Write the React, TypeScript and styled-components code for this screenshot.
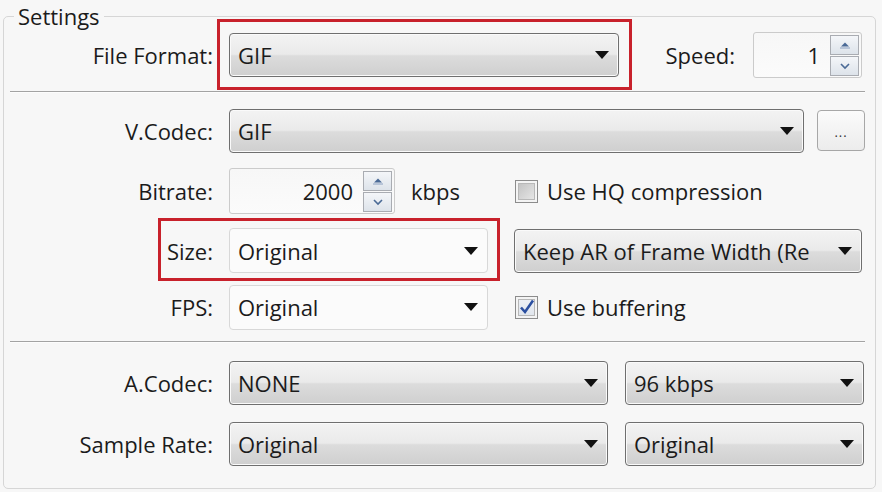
import styled, { createGlobalStyle } from 'styled-components'

const Global = createGlobalStyle`
  html, body {
    margin: 0;
    padding: 0;
    background: #f7f7f7;
  }
  body {
    width: 882px;
    height: 492px;
    overflow: hidden;
    font-family: "Open Sans", "Noto Sans", "Liberation Sans", sans-serif;
    font-size: 22px;
    color: #1b1b1b;
  }
`

const Arrow = () => <Tri />

const SpinButtons = () => (
  <Spinner>
    <SpinBtn>
      <svg width="12" height="8" viewBox="0 0 12 8">
        <path d="M2 5.5 L6 1.5 L10 5.5 Z" fill="#4a6a96" />
        <path d="M1 7 H11" stroke="#8aa0c0" strokeWidth="1" />
      </svg>
    </SpinBtn>
    <SpinBtn>
      <svg width="12" height="8" viewBox="0 0 12 8">
        <path d="M2 2 L6 6 L10 2" fill="none" stroke="#4a6a96" strokeWidth="1.6" />
      </svg>
    </SpinBtn>
  </Spinner>
)

const App = () => {
  return (
    <>
      <Global />
      <Group>
        <Legend>Settings</Legend>

        <Row $top={4}>
          <Label>File Format:</Label>
          <Highlight $inset="-14px -13px -13px -12px">
            <Combo $w={390}>
              <ComboText>GIF</ComboText>
              <Arrow />
            </Combo>
          </Highlight>
          <SideLabel $w={105} $ml={11}>Speed:</SideLabel>
          <Spin $w={109} $ml={18}>
            <SpinValue>1</SpinValue>
            <SpinButtons />
          </Spin>
        </Row>

        <Separator $top={14} />

        <Row $top={16}>
          <Label>V.Codec:</Label>
          <Combo $w={575}>
            <ComboText>GIF</ComboText>
            <Arrow />
          </Combo>
          <DotsButton>...</DotsButton>
        </Row>

        <Row $top={16}>
          <Label>Bitrate:</Label>
          <Spin $w={166}>
            <SpinValue>2000</SpinValue>
            <SpinButtons />
          </Spin>
          <SideText $w={104} $ml={16}>kbps</SideText>
          <Check>
            <CheckBox />
            <span>Use HQ compression</span>
          </Check>
        </Row>

        <Row $top={15} $h={45}>
          <Label>Size:</Label>
          <Highlight $inset="-10px -12px -8px -71px">
            <FlatCombo $w={259}>
              <ComboText>Original</ComboText>
              <Arrow />
            </FlatCombo>
          </Highlight>
          <Combo $w={348} $ml={26}>
            <ComboText>Keep AR of Frame Width (Re</ComboText>
            <Arrow />
          </Combo>
        </Row>

        <Row $top={12}>
          <Label>FPS:</Label>
          <FlatCombo $w={259}>
            <ComboText>Original</ComboText>
            <Arrow />
          </FlatCombo>
          <Check $ml={27}>
            <CheckBox $checked>
              <svg width="18" height="18" viewBox="0 0 18 18">
                <path d="M3 9.5 L7 14 L15 2.5" fill="none" stroke="#2b4fa0" strokeWidth="2.6" />
              </svg>
            </CheckBox>
            <span>Use buffering</span>
          </Check>
        </Row>

        <Separator $top={12} />

        <Row $top={18}>
          <Label>A.Codec:</Label>
          <Combo $w={379}>
            <ComboText>NONE</ComboText>
            <Arrow />
          </Combo>
          <Combo $w={239} $ml={17}>
            <ComboText>96 kbps</ComboText>
            <Arrow />
          </Combo>
        </Row>

        <Row $top={17}>
          <Label>Sample Rate:</Label>
          <Combo $w={379}>
            <ComboText>Original</ComboText>
            <Arrow />
          </Combo>
          <Combo $w={239} $ml={17}>
            <ComboText>Original</ComboText>
            <Arrow />
          </Combo>
        </Row>
      </Group>
    </>
  )
}

export default App

const Group = styled.fieldset`
  box-sizing: border-box;
  width: 873px;
  margin: 3px 0 0 3px;
  padding: 0 10px 22px 6px;
  border: 1px solid #d6d6d6;
  border-radius: 5px;
  min-width: 0;
`

const Legend = styled.legend`
  padding: 0 4px;
  margin-left: 4px;
  line-height: 26px;
  font-size: 22px;
`

const Row = styled.div<{ $top: number; $h?: number }>`
  display: flex;
  align-items: center;
  height: ${p => p.$h ?? 44}px;
  margin-top: ${p => p.$top}px;
`

const Label = styled.div`
  width: 203px;
  margin-right: 16px;
  text-align: right;
  white-space: nowrap;
`

const SideLabel = styled.div<{ $w: number; $ml: number }>`
  width: ${p => p.$w}px;
  margin-left: ${p => p.$ml}px;
  text-align: right;
`

const SideText = styled.div<{ $w: number; $ml: number }>`
  width: ${p => p.$w}px;
  margin-left: ${p => p.$ml}px;
`

const Separator = styled.div<{ $top: number }>`
  height: 1px;
  background: #a3a3a3;
  border-bottom: 1px solid #fdfdfd;
  margin-top: ${p => p.$top}px;
`

const Highlight = styled.div<{ $inset: string }>`
  position: relative;
  display: flex;

  &::after {
    content: '';
    position: absolute;
    inset: ${p => p.$inset};
    border: 3px solid #c8212b;
    pointer-events: none;
  }
`

const Combo = styled.div<{ $w: number; $ml?: number }>`
  box-sizing: border-box;
  width: ${p => p.$w}px;
  height: 44px;
  margin-left: ${p => p.$ml ?? 0}px;
  display: flex;
  align-items: center;
  padding: 0 9px 0 8px;
  border: 1px solid #6f6f6f;
  border-radius: 4px;
  box-shadow: inset 0 0 0 1px #fafafa;
  background: linear-gradient(#f3f3f3 0%, #eaeaea 48%, #dcdcdc 52%, #cfcfcf 100%);
`

const FlatCombo = styled(Combo)`
  border-color: #d8d8d8;
  box-shadow: none;
  background: #fbfbfb;
  height: 45px;
`

const ComboText = styled.div`
  flex: 1;
  white-space: nowrap;
`

const Tri = styled.div`
  width: 0;
  height: 0;
  border-left: 7px solid transparent;
  border-right: 7px solid transparent;
  border-top: 8px solid #111;
`

const Spin = styled.div<{ $w: number; $ml?: number }>`
  box-sizing: border-box;
  width: ${p => p.$w}px;
  height: 46px;
  margin-left: ${p => p.$ml ?? 0}px;
  display: flex;
  align-items: center;
  padding: 0 2px 0 8px;
  border: 1px solid #cbcbcb;
  border-radius: 3px;
  background: linear-gradient(#f7f7f7, #fbfbfb);
`

const SpinValue = styled.div`
  flex: 1;
  text-align: right;
  padding-right: 10px;
`

const Spinner = styled.div`
  display: flex;
  flex-direction: column;
  gap: 1px;
`

const SpinBtn = styled.div`
  box-sizing: border-box;
  width: 29px;
  height: 20px;
  display: flex;
  align-items: center;
  justify-content: center;
  border: 1px solid #a9acb2;
  background: linear-gradient(#f4f6f9, #dde3ea);
`

const DotsButton = styled.div`
  box-sizing: border-box;
  width: 48px;
  height: 41px;
  margin-left: 13px;
  margin-top: -2px;
  display: flex;
  align-items: center;
  justify-content: center;
  padding-top: 4px;
  font-size: 13px;
  letter-spacing: 1px;
  color: #333;
  border: 1px solid #a7a7a7;
  border-radius: 4px;
  background: linear-gradient(#fbfbfb, #ececec);
`

const Check = styled.label<{ $ml?: number }>`
  display: flex;
  align-items: center;
  gap: 9px;
  margin-left: ${p => p.$ml ?? 0}px;
`

const CheckBox = styled.span<{ $checked?: boolean }>`
  box-sizing: border-box;
  width: 23px;
  height: 23px;
  display: flex;
  align-items: center;
  justify-content: center;
  border: 1px solid #8c8c8c;
  background: ${p =>
    p.$checked
      ? 'linear-gradient(#eef1f6, #dfe4ec)'
      : 'linear-gradient(135deg, #bdbdbd, #ececec)'};
  box-shadow: inset 0 0 0 2px #f4f4f4, inset 0 0 0 3px #b8b8b8;
`
